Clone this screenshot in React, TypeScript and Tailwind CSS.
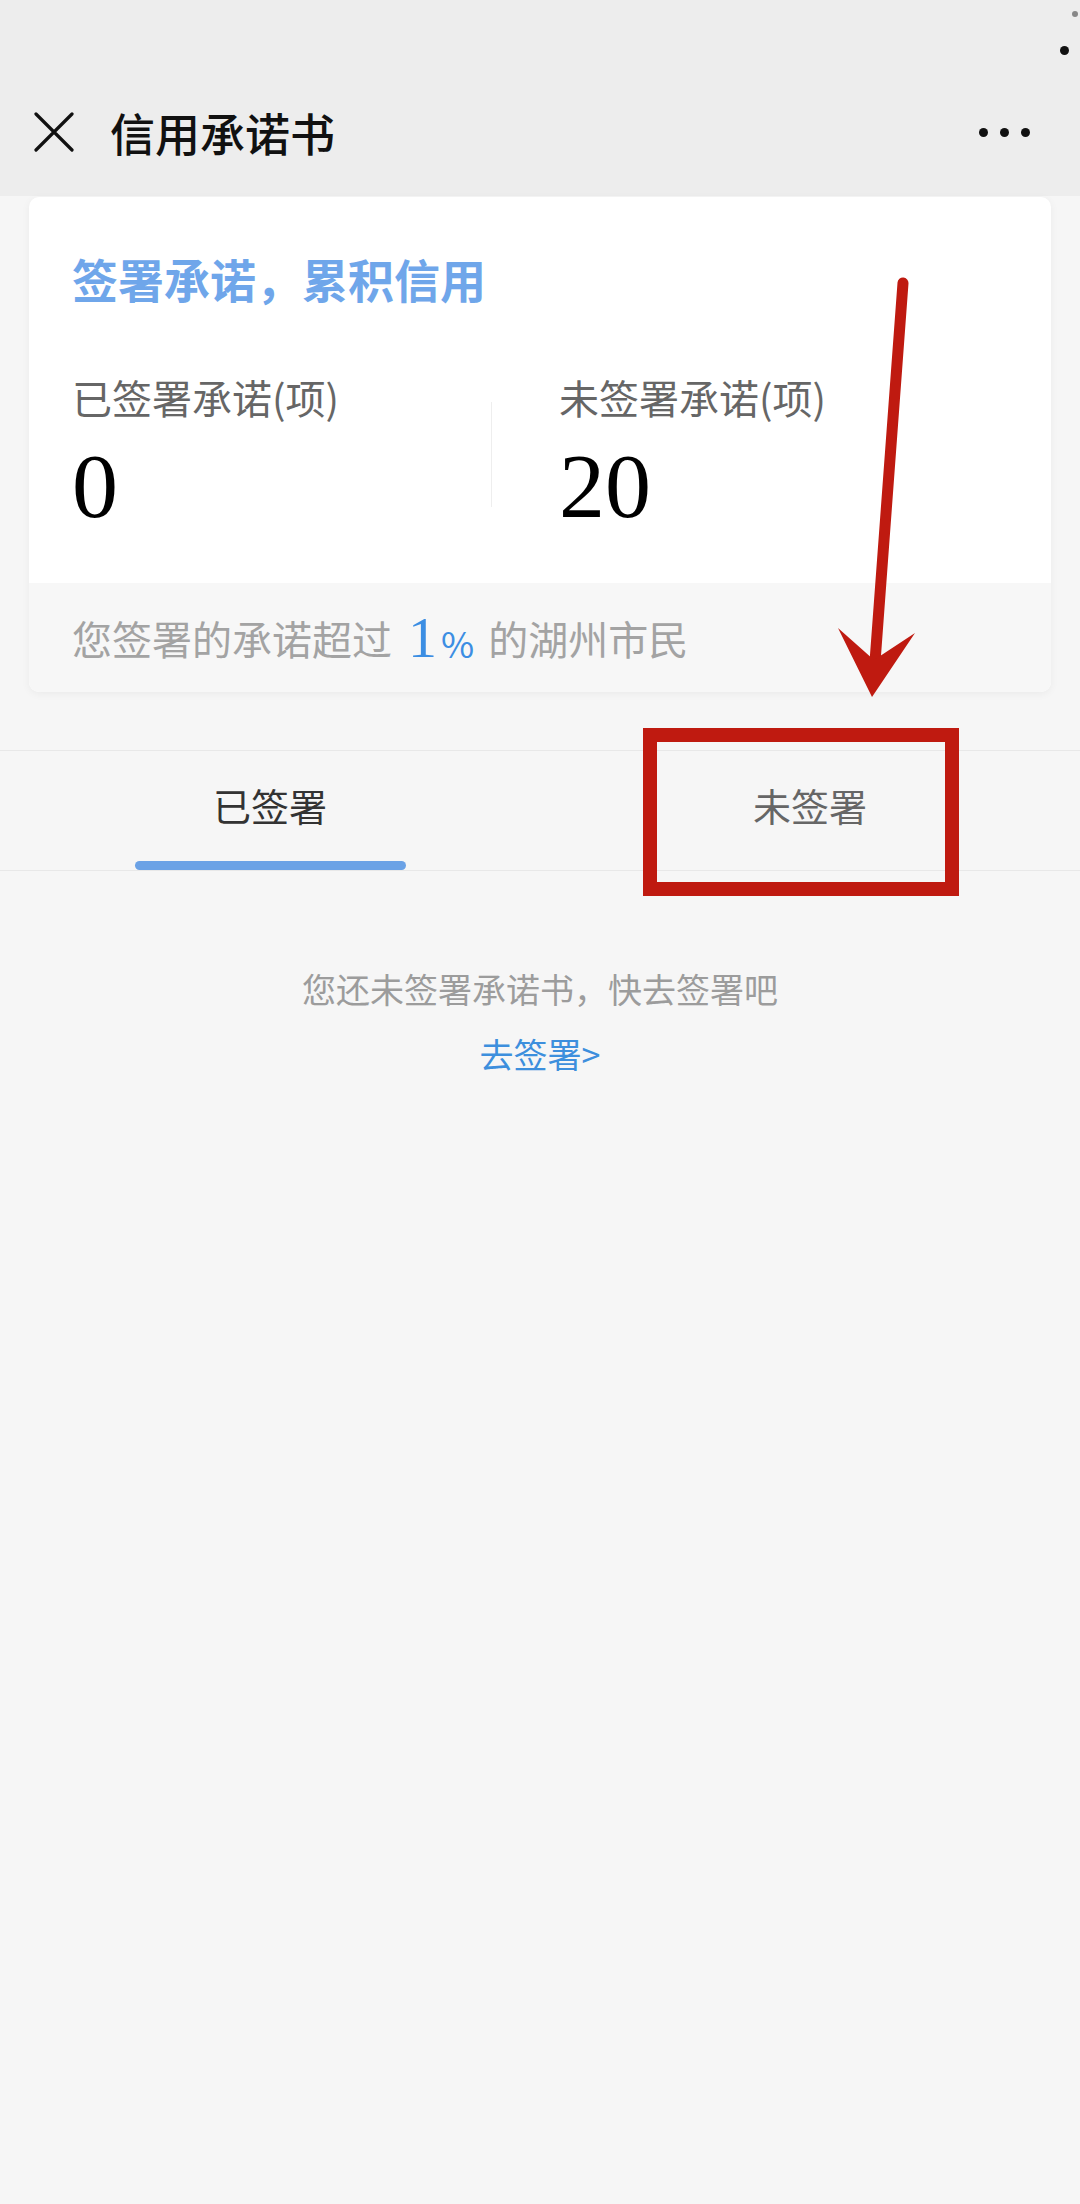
import React from "react";

const CJK = { fontFamily: '"Noto Sans CJK SC", "Noto Sans", sans-serif' };
const SERIF = { fontFamily: '"Liberation Serif", "DejaVu Serif", serif' };

export default function App() {
  return (
    <div className="relative w-[1080px] h-[2204px] overflow-hidden bg-[#f6f6f6]" style={CJK}>
      {/* Header */}
      <div className="h-[196px] bg-[#ededed] flex flex-col">
        <div className="h-[80px] flex justify-end items-start pr-[11px]">
          <div className="flex flex-col items-end">
            <div className="w-[6px] h-[6px] rounded-full bg-[#888] mt-[11px] mr-[-9px]" />
            <div className="w-[9px] h-[9px] rounded-full bg-[#111] mt-[29px]" />
          </div>
        </div>
        <div className="h-[104px] flex items-center pl-[34px] pr-[50px]">
          <svg width="40" height="40" viewBox="0 0 40 40" className="shrink-0">
            <path d="M2 2 L38 38 M38 2 L2 38" stroke="#111" strokeWidth="3.2" strokeLinecap="round" />
          </svg>
          <div className="ml-[36px] text-[45px] leading-none text-[#111] font-medium">信用承诺书</div>
          <div className="ml-auto flex items-center gap-[12px]">
            <div className="w-[9px] h-[9px] rounded-full bg-[#111]" />
            <div className="w-[9px] h-[9px] rounded-full bg-[#111]" />
            <div className="w-[9px] h-[9px] rounded-full bg-[#111]" />
          </div>
        </div>
      </div>

      {/* Card */}
      <div className="mx-[29px] mt-[1px] rounded-[10px] bg-white shadow-[0_2px_8px_rgba(0,0,0,0.05)] overflow-hidden">
        <div className="pl-[43px] pt-[58px] pb-[51px]">
          <div className="text-[46px] leading-none font-bold text-[#6fa6ea]">签署承诺，累积信用</div>
          <div className="mt-[76px] flex">
            <div className="w-[419px] flex flex-col">
              <div className="text-[40px] leading-none text-[#666]">已签署承诺(项)</div>
              <div className="mt-[23px] text-[92px] leading-none text-black" style={SERIF}>0</div>
            </div>
            <div className="w-px h-[105px] bg-[#eeeeee] mt-[25px]" />
            <div className="pl-[67px] flex flex-col">
              <div className="text-[40px] leading-none text-[#666]">未签署承诺(项)</div>
              <div className="mt-[23px] text-[92px] leading-none text-black" style={SERIF}>20</div>
            </div>
          </div>
        </div>
        <div className="h-[109px] bg-[#f7f7f7] flex items-center pl-[43px]">
          <span className="text-[40px] leading-none text-[#a3a3a3]">您签署的承诺超过</span>
          <span className="ml-[16px] text-[58px] leading-none text-[#3c8ee3]" style={SERIF}>1</span>
          <span className="ml-[4px] text-[36px] leading-none text-[#3c8ee3] mt-[8px]">%</span>
          <span className="ml-[14px] text-[40px] leading-none text-[#a3a3a3]">的湖州市民</span>
        </div>
      </div>

      {/* Tabs */}
      <div className="mt-[58px] h-[121px] border-t border-b border-[#e8e8e8] flex">
        <div className="flex-1 flex flex-col items-center">
          <div className="pt-[35px] text-[38px] leading-none text-[#333]">已签署</div>
          <div className="mt-auto w-[271px] h-[9px] rounded-full bg-[#6ba2e6]" />
        </div>
        <div className="flex-1 flex flex-col items-center">
          <div className="pt-[35px] text-[38px] leading-none text-[#666]">未签署</div>
        </div>
      </div>

      {/* Empty state */}
      <div className="flex flex-col items-center pt-[101px]">
        <div className="text-[34px] leading-none text-[#9c9c9c]">您还未签署承诺书，快去签署吧</div>
        <div className="mt-[31px] text-[34px] leading-none text-[#3d8fdd]">去签署&gt;</div>
      </div>

      {/* Red annotation box */}
      <div className="absolute left-[643px] top-[728px] w-[316px] h-[168px] border-[14px] border-[#bf1a10]" />

      {/* Red arrow */}
      <svg className="absolute left-0 top-0 pointer-events-none" width="1080" height="1000" viewBox="0 0 1080 1000">
        <path d="M903 283 L875 662" stroke="#bf1a10" strokeWidth="11" strokeLinecap="round" fill="none" />
        <path d="M872 697 L838 628 L874 660 L915 633 Z" fill="#bf1a10" />
      </svg>
    </div>
  );
}
